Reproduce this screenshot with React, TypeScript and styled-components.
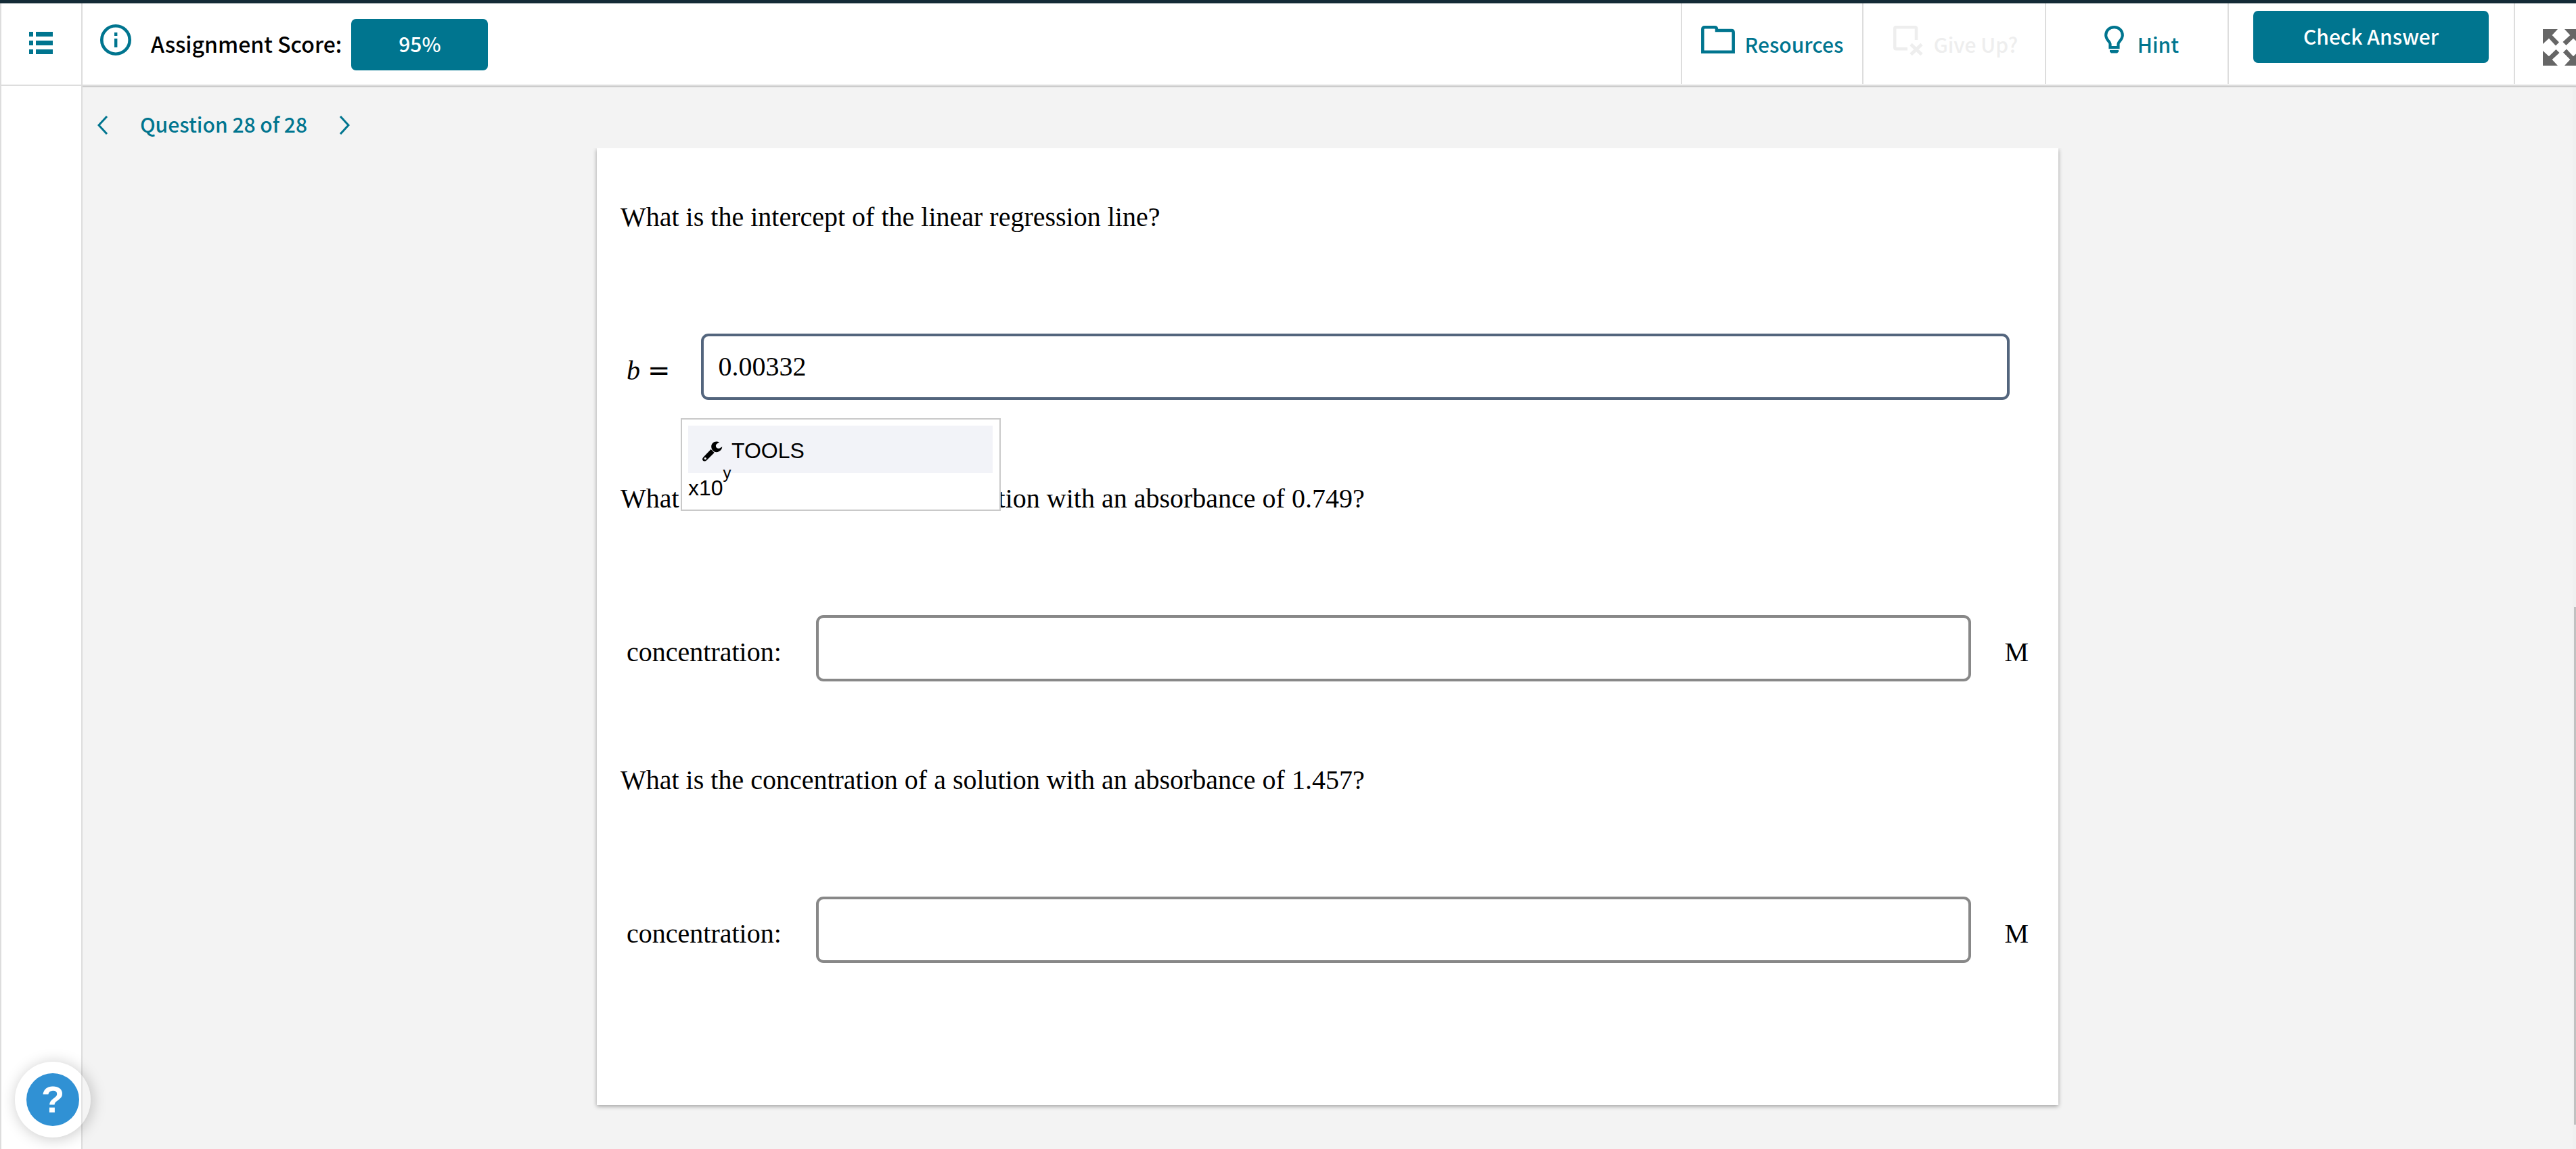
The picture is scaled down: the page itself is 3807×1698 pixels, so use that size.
import React from "react";
import styled, { createGlobalStyle } from "styled-components";

const teal = "#00758f";
const line = "#dddddd";
const ui = `"Noto Sans CJK SC", "Noto Sans", sans-serif`;
const serif = `"Liberation Serif", "Times New Roman", serif`;
const sans = `"Liberation Sans", Arial, sans-serif`;

const GlobalStyle = createGlobalStyle`
  *, *::before, *::after { box-sizing: border-box; }
  html { background: #f3f3f3; }
  body { margin: 0; color: #000; font-family: ${ui}; }
  button, input { font: inherit; color: inherit; }
  button { border: 0; background: none; padding: 0; cursor: pointer; }
  svg { display: block; flex: none; }
`;

const Page = styled.div`
  display: flex;
  min-height: 100vh;
  border-top: 5px solid #142b37;
  overflow: hidden;
`;

const Sidebar = styled.aside`
  flex: none;
  width: 122px;
  background: #fff;
  border-left: 2px solid ${line};
  border-right: 2px solid ${line};
`;

const MenuButton = styled.button`
  display: flex;
  align-items: flex-start;
  width: 100%;
  height: 122px;
  padding: 42px 41px 0;
  border-bottom: 2px solid ${line};
`;

const Content = styled.div`
  flex: 1;
  min-width: 0;
  display: flex;
  flex-direction: column;
`;

const Header = styled.header`
  display: flex;
  height: 124px;
  background: #fff;
  border-bottom: 2px solid #cccccc;
  box-shadow: inset 0 -2px ${line};
`;

const Score = styled.div`
  flex: 1;
  display: flex;
  align-items: flex-start;
  padding: 23px 0 0 26px;
  font-size: 32px;
  line-height: 72px;
  font-weight: 500;
  white-space: nowrap;
`;

const InfoButton = styled.button`
  margin: 8px 29px 0 0;
`;

const Badge = styled.strong`
  width: 202px;
  height: 76px;
  margin-left: 14px;
  border-radius: 7px;
  background: ${teal};
  color: #fff;
  font-size: 30px;
  font-weight: 500;
  text-align: center;
`;

const Action = styled.button<{ $gap: number; $width?: number; $indent?: number }>`
  display: flex;
  justify-content: center;
  align-items: flex-start;
  gap: ${(p) => p.$gap}px;
  width: ${(p) => p.$width ?? 270}px;
  height: 119px;
  padding: 33px 0 0 ${(p) => p.$indent ?? 0}px;
  border-left: 2px solid ${line};
  color: ${teal};
  font-size: 30px;
  line-height: 54px;
  font-weight: 500;
  white-space: nowrap;

  &:disabled { color: #eeeeee; cursor: default; }
`;

const SubmitCell = styled.div`
  width: 423px;
  height: 119px;
  padding: 11px 37px 0 36px;
  border-left: 2px solid ${line};
`;

const SubmitButton = styled.button`
  display: block;
  width: 100%;
  height: 77px;
  padding-bottom: 3px;
  border-radius: 7px;
  background: ${teal};
  color: #fff;
  font-size: 30px;
  line-height: 74px;
  font-weight: 500;
`;

const ExpandButton = styled.button`
  width: 92px;
  height: 119px;
  padding: 38px 0 0 41px;
  border-left: 2px solid ${line};
  overflow: hidden;
  display: flex;
  align-items: flex-start;
`;

const Body = styled.div`
  flex: 1;
  display: flex;
`;

const Main = styled.main`
  flex: 1;
  min-width: 0;
  background: #f3f3f3;
`;

const QuestionNav = styled.nav`
  display: flex;
  align-items: center;
  height: 90px;
  padding: 22px 0 0 22px;
  color: ${teal};
  font-size: 30px;
  line-height: 64px;
  font-weight: 500;

  span { margin: 0 47px; padding-bottom: 4px; }
`;

const Card = styled.section`
  width: 100%;
  max-width: 2160px;
  margin: 0 auto 65px;
  padding: 78px 44px 88px 35px;
  background: #fff;
  box-shadow: 0 2px 6px rgba(0, 0, 0, 0.35);
  clip-path: inset(0 -10px -12px -10px);
  font-family: ${serif};
  font-size: 40px;
`;

const Question = styled.div`
  height: 416px;
`;

const Prompt = styled.p`
  margin: 0;
  line-height: 48px;
`;

const AnswerRow = styled.div`
  position: relative;
  display: flex;
  align-items: center;
  margin-top: 148px;
  padding-left: 9px;

  > label, > span { padding-top: 11px; white-space: nowrap; line-height: 46px; }
`;

const AnswerInput = styled.input<{ $active?: boolean }>`
  flex: 1;
  min-width: 0;
  height: 98px;
  margin: ${(p) => (p.$active ? "0 28px 0 45px" : "0 49px 0 51px")};
  padding: 0 22px 2px;
  border: 4px solid ${(p) => (p.$active ? "#53657d" : "#888888")};
  border-radius: 11px;
  background: #fff;
  outline: none;
`;

const Equals = styled.span`
  margin-left: 11px;
  font-family: "DejaVu Sans", sans-serif;
`;

const ToolsMenu = styled.div`
  position: absolute;
  z-index: 1;
  top: 125px;
  left: 89px;
  width: 473px;
  height: 137px;
  padding: 9px 10px 0 9px;
  border: 2px solid #c9c9c9;
  background: #fff;
  font-family: ${sans};
  font-size: 32px;
`;

const ToolsTitle = styled.div`
  display: flex;
  align-items: center;
  gap: 13px;
  height: 70px;
  padding: 5px 0 0 21px;
  background: #f2f3f8;
`;

const PowerButton = styled.button`
  display: flex;
  align-items: flex-start;
  line-height: 44px;

  sup { margin-top: -16px; font-size: 24px; line-height: 32px; }
`;

const ScrollTrack = styled.div`
  flex: none;
  width: 5px;
  padding: 768px 0 36px 2px;
  display: flex;
  background: #f0f0f0;

  &::before { content: ""; flex: 1; background: #c1c1c1; }
`;

const HelpButton = styled.button`
  position: fixed;
  left: 22px;
  bottom: 17px;
  width: 112px;
  height: 112px;
  display: flex;
  align-items: center;
  justify-content: center;
  border-radius: 50%;
  background: rgba(255, 255, 255, 0.15);
  box-shadow: 2px 2px 22px rgba(0, 0, 0, 0.22);
`;

const HelpDisc = styled.span`
  width: 78px;
  height: 78px;
  border-radius: 50%;
  background: #3091d4;
  color: #fff;
  font-family: ${sans};
  font-size: 56px;
  line-height: 78px;
  font-weight: 700;
`;

const ListIcon = () => (
  <svg width="35" height="33" viewBox="0 0 35 33" fill={teal}>
    {[0, 13, 26].map((y) => (
      <g key={y}>
        <rect x="0" y={y} width="6" height="7" />
        <rect x="10" y={y} width="25" height="7" />
      </g>
    ))}
  </svg>
);

const InfoIcon = () => (
  <svg width="46" height="46" viewBox="0 0 46 46">
    <circle cx="23" cy="23" r="20.7" fill="none" stroke={teal} strokeWidth="4.6" />
    <path d="M21 12h4.4v5H21zM21 21h4.4v13H21z" fill={teal} />
  </svg>
);

const Chevron = ({ right }: { right?: boolean }) => (
  <svg width="16" height="28" viewBox="0 0 16 28" fill="none" stroke={teal} strokeWidth="3">
    <path d={right ? "M2 1l12 13L2 27" : "M14 1L2 14l12 13"} />
  </svg>
);

const FolderIcon = () => (
  <svg width="50" height="42" viewBox="0 0 50 42" fill="none" stroke={teal} strokeWidth="4.5">
    <path d="M2.3 38.7V5q0-2.700 3-2.700h14.700q3 0 3 3v1.700h22q2.700 0 2.700 3v28.700z" />
  </svg>
);

const GiveUpIcon = () => (
  <svg width="44" height="44" viewBox="0 0 44 44" fill="none" stroke="currentColor" strokeWidth="4.5">
    <path d="M34 21V4q0-1.700-1.700-1.700H4Q2.300 2.300 2.300 4v28.500q0 1.700 1.700 1.700h17" />
    <path d="M26 27.500l16 15M42 27.500l-16 15" strokeWidth="5" />
  </svg>
);

const BulbIcon = () => (
  <svg width="29" height="41" viewBox="0 0 29 41">
    <path
      d="M8.500 32.200v-5.500c0-3-6.300-6-6.300-12.700C2.200 7 7.500 2.200 14.500 2.200S26.800 7 26.800 14c0 6.700-6.300 9.700-6.300 12.700v5.500z"
      fill="none"
      stroke={teal}
      strokeWidth="4.200"
    />
    <path d="M8 36h13v2.500l-2 2H10l-2-2z" fill={teal} />
  </svg>
);

const WrenchIcon = () => (
  <svg width="30" height="30" viewBox="0 0 90 90">
    <path d="M76 5C56-5 37 9 40 28C42 45 59 53 73 46C82 42 87 35 88 25L75 32C66 34 58 27 60 18C62 11 69 8 76 5Z" />
    <path
      fillRule="evenodd"
      d="M38 36L53 51L19 85Q11 92 3 86Q-3 79 4 71ZM13 72a5 5 0 1 0 0.100 0Z"
    />
  </svg>
);

const ExpandIcon = () => (
  <svg width="54" height="54" viewBox="0 0 54 54" fill="#666666">
    {[0, 90, 180, 270].map((turn) => (
      <path
        key={turn}
        transform={`rotate(${turn} 27 27)`}
        d="M0 0H22L13.700 9L24 19.500L19 24.500L9 13.700L0 22Z"
      />
    ))}
  </svg>
);

type AnswerProps = { id: string; prompt: string };

const Concentration = ({ id, prompt }: AnswerProps) => (
  <Question>
    <Prompt>{prompt}</Prompt>
    <AnswerRow>
      <label htmlFor={id}>concentration:</label>
      <AnswerInput id={id} type="text" />
      <span>M</span>
    </AnswerRow>
  </Question>
);

export default function App() {
  return (
    <>
      <GlobalStyle />
      <Page>
        <Sidebar>
          <MenuButton aria-label="Menu"><ListIcon /></MenuButton>
        </Sidebar>
        <Content>
          <Header>
            <Score>
              <InfoButton aria-label="Score information"><InfoIcon /></InfoButton>
              <span>Assignment Score:</span>
              <Badge>95%</Badge>
            </Score>
            <Action $gap={15} $width={268}><FolderIcon /><span>Resources</span></Action>
            <Action $gap={16} $indent={4} disabled><GiveUpIcon /><span>Give Up?</span></Action>
            <Action $gap={20} $indent={14}><BulbIcon /><span>Hint</span></Action>
            <SubmitCell><SubmitButton>Check Answer</SubmitButton></SubmitCell>
            <ExpandButton aria-label="Full screen"><ExpandIcon /></ExpandButton>
          </Header>
          <Body>
            <Main>
              <QuestionNav>
                <button aria-label="Previous question"><Chevron /></button>
                <span>Question 28 of 28</span>
                <button aria-label="Next question"><Chevron right /></button>
              </QuestionNav>
              <Card>
                <Question>
                  <Prompt>What is the intercept of the linear regression line?</Prompt>
                  <AnswerRow>
                    <label htmlFor="intercept"><i>b</i><Equals>=</Equals></label>
                    <AnswerInput id="intercept" type="text" defaultValue="0.00332" $active />
                    <ToolsMenu>
                      <ToolsTitle><WrenchIcon />TOOLS</ToolsTitle>
                      <PowerButton>x10<sup>y</sup></PowerButton>
                    </ToolsMenu>
                  </AnswerRow>
                </Question>
                <Concentration id="first" prompt="What is the concentration of a solution with an absorbance of 0.749?" />
                <Concentration id="second" prompt="What is the concentration of a solution with an absorbance of 1.457?" />
              </Card>
            </Main>
            <ScrollTrack />
          </Body>
        </Content>
      </Page>
      <HelpButton aria-label="Help"><HelpDisc>?</HelpDisc></HelpButton>
    </>
  );
}
